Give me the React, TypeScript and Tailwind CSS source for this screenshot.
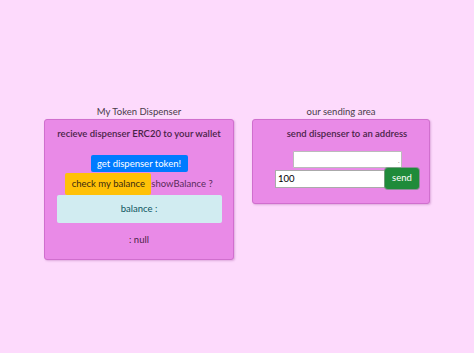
export default function App() {
  return (
    <div
      className="w-[474px] h-[353px] bg-[#fddafc] text-[#3b2a3b]"
      style={{ fontFamily: 'Lato, "Open Sans", sans-serif' }}
    >
      <div className="flex gap-[18px] pl-[44px] pt-[105px]">
        {/* left column */}
        <div className="flex flex-col w-[190px]">
          <div className="text-center text-[9.5px] leading-[14px] text-[#4a3a4a]">My Token Dispenser</div>
          <div className="h-[141px] rounded-[3px] border border-[#d06fce] bg-[#e98ae7] flex flex-col items-center shadow-[1px_1px_2px_rgba(150,60,150,0.3)]">
            <div className="mt-[7px] text-[9.5px] font-semibold leading-[14px] text-[#4a2448]">
              recieve dispenser ERC20 to your wallet
            </div>
            <button className="mt-[14px] h-[17px] w-[97px] rounded-[2px] bg-[#007bff] text-white text-[9.5px] leading-[17px]">
              get dispenser token!
            </button>
            <div className="mt-[1px] flex items-center">
              <button className="h-[22px] w-[86px] rounded-[2px] bg-[#ffc107] text-[#3a2a10] text-[9.5px] leading-[22px]">
                check my balance
              </button>
              <span className="text-[9.5px] text-[#5a2a5a]">showBalance ?</span>
            </div>
            <div className="h-[28px] w-[165px] rounded-[2px] bg-[#d1ecf1] text-[#0c5460] text-[9.5px] flex items-center justify-center">
              balance :
            </div>
            <div className="mt-[10px] text-[9.5px] text-[#4a2448]">: null</div>
          </div>
        </div>
        {/* right column */}
        <div className="flex flex-col w-[178px]">
          <div className="text-center text-[9.5px] leading-[14px] text-[#4a3a4a]">our sending area</div>
          <div className="h-[85px] rounded-[3px] border border-[#d06fce] bg-[#e98ae7] flex flex-col items-center pl-[12px] shadow-[1px_1px_2px_rgba(150,60,150,0.3)]">
            <div className="mt-[7px] text-[9.5px] font-semibold leading-[14px] text-[#4a2448]">
              send dispenser to an address
            </div>
            <div className="mt-[10px] h-[17px] w-[109px] bg-white border border-[#bbb] rounded-[1px] flex justify-end items-end pr-[1px]">
              <span className="text-[6px] leading-[10px] text-[#999]">·</span>
            </div>
            <div className="flex items-center">
              <div className="h-[18px] w-[110px] bg-white border border-[#aaa] text-[9.5px] leading-[16px] pl-[2px] text-black">100</div>
              <button className="h-[21px] w-[34px] rounded-[3px] bg-[#1f8b3a] text-white text-[9.5px] shadow-[0_0_0_1px_rgba(60,140,80,0.5)]">
                send
              </button>
            </div>
          </div>
        </div>
      </div>
    </div>
  );
}
